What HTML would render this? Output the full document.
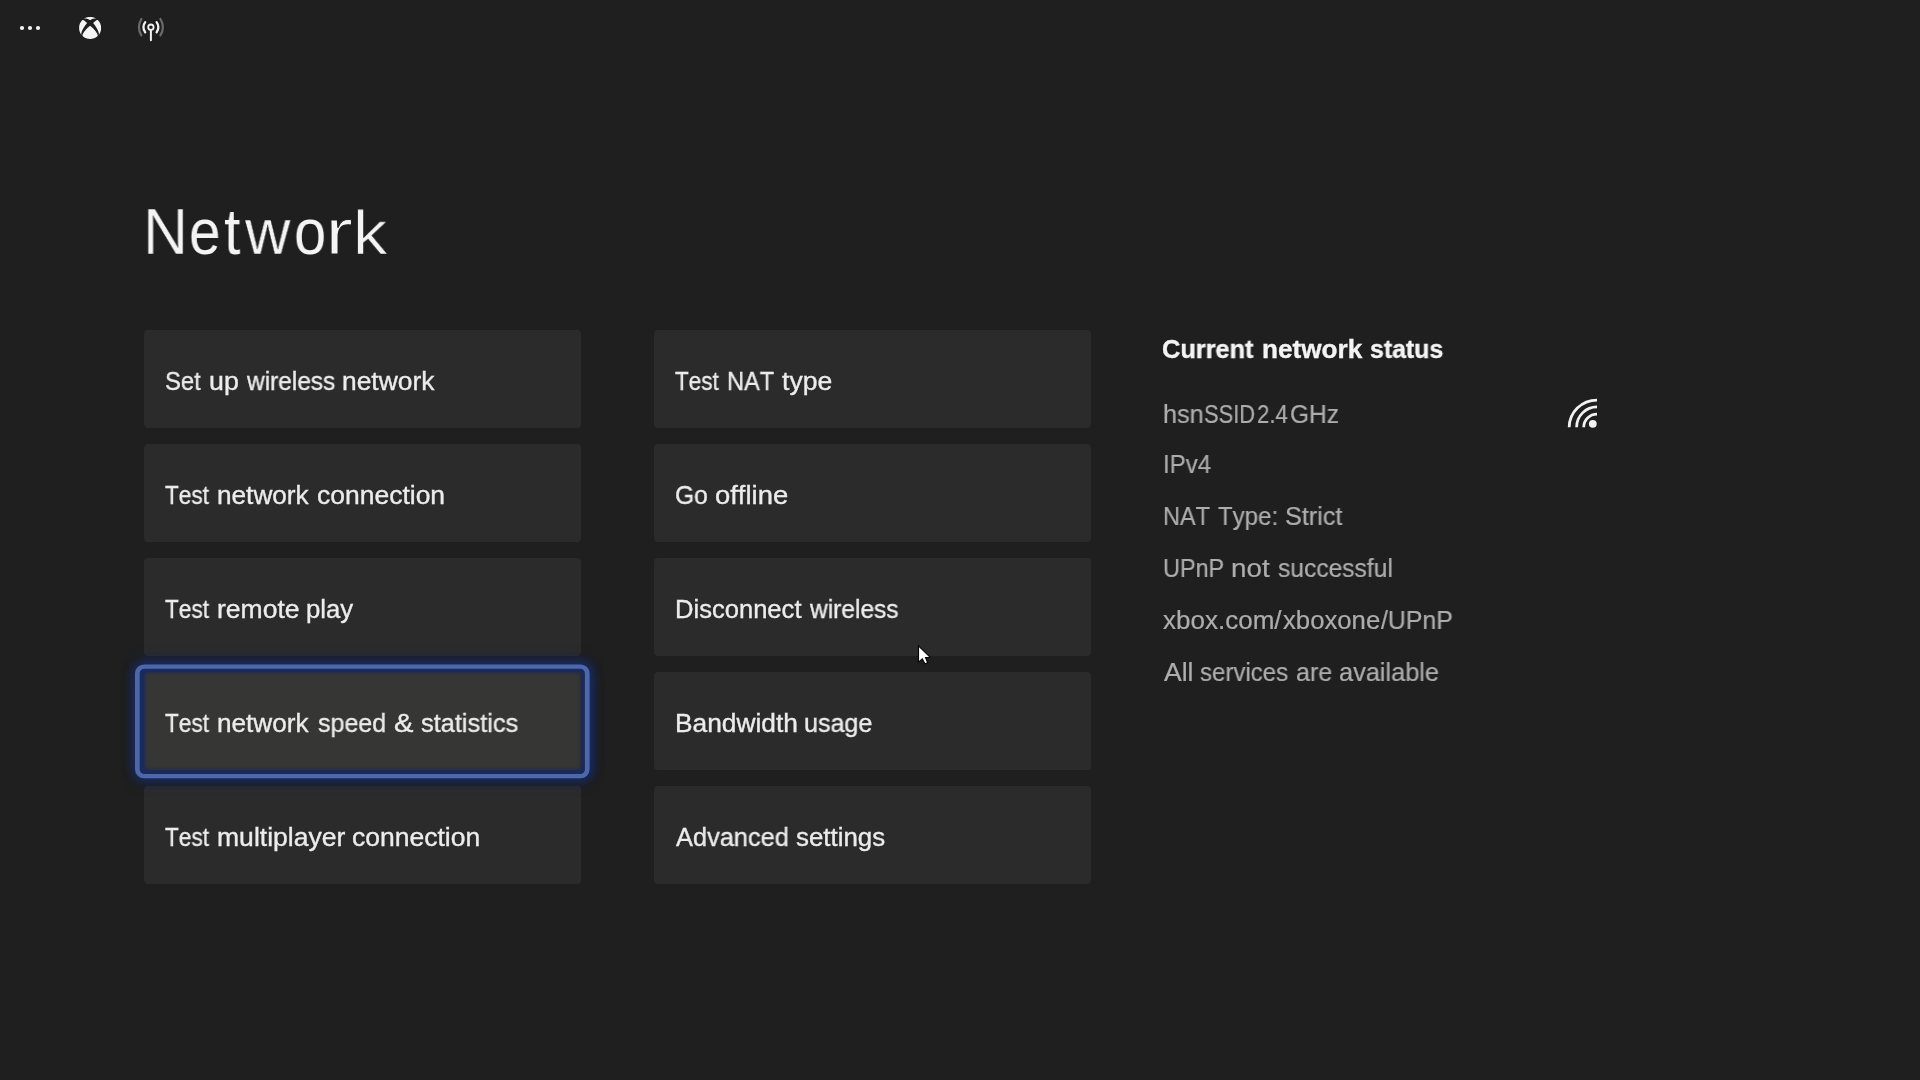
<!DOCTYPE html>
<html>
<head>
<meta charset="utf-8">
<title>Network</title>
<style>
  html, body { margin: 0; padding: 0; }
  body {
    width: 1920px; height: 1080px; overflow: hidden; position: relative;
    background: #1f1f1f;
    font-family: "Liberation Sans", sans-serif;
    color: #f4f4f4;
  }
  .abs { position: absolute; }
  .t { position: absolute; white-space: nowrap; line-height: 1; transform-origin: 0 0; will-change: transform; font-kerning: none; }
  .btn { position: absolute; width: 437.5px; height: 98.2px; background: #2b2b2b; border-radius: 4px; }
  .c1 { left: 143.8px; }
  .c2 { left: 653.8px; }
  .r1 { top: 329.5px; } .r2 { top: 443.5px; } .r3 { top: 557.5px; } .r4 { top: 671.5px; } .r5 { top: 785.5px; }
  .glow {
    position: absolute; left: 136px; top: 665px; width: 453px; height: 112px; border-radius: 9px; background: #1a2a5a;
    box-shadow: 0 0 8px 3px rgba(23,43,102,0.95), 0 -5px 12px 3px rgba(24,44,104,0.36), 0 5px 12px 3px rgba(24,44,104,0.36);
  }
  .sel { background: #363635; box-shadow: inset 0 0 3px 1px rgba(26,42,92,0.75); }
</style>
</head>
<body>

<!-- top bar icons -->
<svg class="abs" style="left:0;top:0" width="240" height="60" viewBox="0 0 240 60">
  <circle cx="22" cy="28" r="2.1" fill="#f2f2f2"/>
  <circle cx="30" cy="28" r="2.1" fill="#f2f2f2"/>
  <circle cx="38" cy="28" r="2.1" fill="#f2f2f2"/>
  <!-- xbox sphere -->
  <svg x="79.05" y="16.9" width="22.1" height="22.1" viewBox="0 0 24 24"><path fill="#f4f4f4" d="M4.102 21.033C6.211 22.881 8.977 24 12 24c3.026 0 5.789-1.119 7.902-2.967 1.877-1.912-4.316-8.709-7.902-11.417-3.582 2.708-9.779 9.505-7.898 11.417zm11.16-14.406c2.5 2.961 7.484 10.313 6.076 12.912C23.002 17.48 24 14.861 24 12.004c0-3.34-1.365-6.362-3.57-8.536 0 0-.027-.022-.082-.042-.063-.022-.152-.045-.281-.045-.592 0-1.985.434-4.805 3.246zM3.654 3.426c-.057.02-.082.041-.086.042C1.365 5.642 0 8.664 0 12.004c0 2.854.998 5.473 2.661 7.533-1.401-2.605 3.579-9.951 6.08-12.91-2.82-2.813-4.216-3.245-4.806-3.245-.131 0-.223.021-.281.046v-.002zM12 3.551S9.055 1.828 6.755 1.746c-.903-.033-1.454.295-1.521.339C7.379.646 9.659 0 11.984 0H12c2.334 0 4.605.646 6.766 2.085-.068-.046-.615-.372-1.520-.339C14.946 1.828 12 3.545 12 3.545v.006z"/></svg>
  <!-- broadcast -->
  <g fill="none" stroke-linecap="round">
    <circle cx="150.9" cy="27.2" r="2.7" stroke="#f2f2f2" stroke-width="1.8"/>
    <path d="M150.9 30.2 V40.2" stroke="#f2f2f2" stroke-width="2"/>
    <path d="M145.2 22.2 Q141.6 27.2 145.2 32.4" stroke="#f2f2f2" stroke-width="2.3"/>
    <path d="M156.6 22.2 Q160.2 27.2 156.6 32.4" stroke="#f2f2f2" stroke-width="2.3"/>
    <path d="M141.4 19 Q136.4 27.2 141.4 35.4" stroke="#6a6a6a" stroke-width="2.2"/>
    <path d="M160.4 19 Q165.4 27.2 160.4 35.4" stroke="#6a6a6a" stroke-width="2.2"/>
  </g>
</svg>

<h1 style="margin:0;font-weight:normal"><span class="t" style="left:143.13px;top:199.04px;font-size:65.4px;transform:scaleX(0.9550);-webkit-text-stroke:0.30px #1f1f1f;">N</span><span class="t" style="left:189.39px;top:199.04px;font-size:65.4px;transform:scaleX(0.8668);">e</span><span class="t" style="left:223.90px;top:199.04px;font-size:65.4px;transform:scaleX(0.9041);">t</span><span class="t" style="left:245.23px;top:199.04px;font-size:65.4px;transform:scaleX(0.9609);-webkit-text-stroke:0.34px #1f1f1f;">w</span><span class="t" style="left:293.57px;top:199.04px;font-size:65.4px;transform:scaleX(0.8841);">o</span><span class="t" style="left:325.06px;top:199.04px;font-size:65.4px;transform:scaleX(1.2933);-webkit-text-stroke:1.20px #1f1f1f;">r</span><span class="t" style="left:353.39px;top:199.04px;font-size:65.4px;transform-origin:0 55.36px;transform:scale(1.0514,0.9520);-webkit-text-stroke:0.73px #1f1f1f;">k</span></h1>

<!-- buttons -->
<div class="btn c1 r1"></div>
<div class="btn c1 r2"></div>
<div class="btn c1 r3"></div>
<div class="btn c1 r5"></div>
<div class="glow"></div>
<svg class="abs" style="left:125px;top:654px" width="475" height="135" viewBox="125 654 475 135">
  <path fill-rule="evenodd" fill="#4c68aa" d="M144 664.4 H580.6 A9 9 0 0 1 589.6 673.4 V769.3 A9 9 0 0 1 580.6 778.3 H144 A9 9 0 0 1 135 769.3 V673.4 A9 9 0 0 1 144 664.4 Z M144.29999999999998 668.7 H580.3 A4.6 4.6 0 0 1 584.9 673.3000000000001 V769.4 A4.6 4.6 0 0 1 580.3 774.0 H144.29999999999998 A4.6 4.6 0 0 1 139.7 769.4 V673.3000000000001 A4.6 4.6 0 0 1 144.29999999999998 668.7 Z"/>
</svg>
<div class="btn c1 r4 sel"></div>
<div class="btn c2 r1"></div>
<div class="btn c2 r2"></div>
<div class="btn c2 r3"></div>
<div class="btn c2 r4"></div>
<div class="btn c2 r5"></div>

<div><span class="t" style="left:165.14px;top:368.91px;font-size:25.5px;transform:scaleX(0.9328);color:#ececec;-webkit-text-stroke:0.35px #ececec;">Set</span> <span class="t" style="left:208.78px;top:368.91px;font-size:25.5px;transform:scaleX(1.0512);color:#ececec;-webkit-text-stroke:0.35px #ececec;">up</span> <span class="t" style="left:246.76px;top:368.91px;font-size:25.5px;transform:scaleX(0.9587);color:#ececec;-webkit-text-stroke:0.35px #ececec;">wireless</span> <span class="t" style="left:342.47px;top:368.91px;font-size:25.5px;transform:scaleX(1.0344);color:#ececec;-webkit-text-stroke:0.35px #ececec;">network</span></div>
<div><span class="t" style="left:165.22px;top:482.91px;font-size:25.5px;transform:scaleX(0.8857);color:#ececec;-webkit-text-stroke:0.35px #ececec;">Test</span> <span class="t" style="left:216.99px;top:482.91px;font-size:25.5px;transform:scaleX(1.0265);color:#ececec;-webkit-text-stroke:0.35px #ececec;">network</span> <span class="t" style="left:316.90px;top:482.91px;font-size:25.5px;transform:scaleX(1.0385);color:#ececec;-webkit-text-stroke:0.35px #ececec;">connection</span></div>
<div><span class="t" style="left:165.02px;top:596.91px;font-size:25.5px;transform:scaleX(0.8877);color:#ececec;-webkit-text-stroke:0.35px #ececec;">Test</span> <span class="t" style="left:216.86px;top:596.91px;font-size:25.5px;transform:scaleX(1.0400);color:#ececec;-webkit-text-stroke:0.35px #ececec;">remote</span> <span class="t" style="left:306.37px;top:596.91px;font-size:25.5px;transform:scaleX(1.0081);color:#ececec;-webkit-text-stroke:0.35px #ececec;">play</span></div>
<div><span class="t" style="left:165.22px;top:710.91px;font-size:25.5px;transform:scaleX(0.8877);color:#ececec;-webkit-text-stroke:0.35px #ececec;">Test</span> <span class="t" style="left:217.09px;top:710.91px;font-size:25.5px;transform:scaleX(1.0253);color:#ececec;-webkit-text-stroke:0.35px #ececec;">network</span> <span class="t" style="left:317.53px;top:710.91px;font-size:25.5px;transform:scaleX(0.9810);color:#ececec;-webkit-text-stroke:0.35px #ececec;">speed</span> <span class="t" style="left:393.60px;top:710.91px;font-size:25.5px;transform:scaleX(1.1423);color:#ececec;-webkit-text-stroke:0.35px #ececec;">&amp;</span> <span class="t" style="left:421.02px;top:710.91px;font-size:25.5px;transform:scaleX(0.9949);color:#ececec;-webkit-text-stroke:0.35px #ececec;">statistics</span></div>
<div><span class="t" style="left:165.12px;top:824.91px;font-size:25.5px;transform:scaleX(0.8877);color:#ececec;-webkit-text-stroke:0.35px #ececec;">Test</span> <span class="t" style="left:216.86px;top:824.91px;font-size:25.5px;transform:scaleX(1.0411);color:#ececec;-webkit-text-stroke:0.35px #ececec;">multiplayer</span> <span class="t" style="left:352.40px;top:824.91px;font-size:25.5px;transform:scaleX(1.0394);color:#ececec;-webkit-text-stroke:0.35px #ececec;">connection</span></div>
<div><span class="t" style="left:675.27px;top:368.91px;font-size:25.5px;transform:scaleX(0.8826);color:#ececec;-webkit-text-stroke:0.35px #ececec;">Test</span> <span class="t" style="left:727.34px;top:368.91px;font-size:25.5px;transform:scaleX(0.9230);color:#ececec;-webkit-text-stroke:0.35px #ececec;">NAT</span> <span class="t" style="left:782.37px;top:368.91px;font-size:25.5px;transform:scaleX(1.0411);color:#ececec;-webkit-text-stroke:0.35px #ececec;">type</span></div>
<div><span class="t" style="left:674.89px;top:482.91px;font-size:25.5px;transform:scaleX(0.9664);color:#ececec;-webkit-text-stroke:0.35px #ececec;">Go</span> <span class="t" style="left:714.97px;top:482.91px;font-size:25.5px;transform:scaleX(1.0745);color:#ececec;-webkit-text-stroke:0.35px #ececec;">offline</span></div>
<div><span class="t" style="left:674.68px;top:596.91px;font-size:25.5px;transform:scaleX(1.0027);color:#ececec;-webkit-text-stroke:0.35px #ececec;">Disconnect</span> <span class="t" style="left:809.96px;top:596.91px;font-size:25.5px;transform:scaleX(0.9620);color:#ececec;-webkit-text-stroke:0.35px #ececec;">wireless</span></div>
<div><span class="t" style="left:674.62px;top:710.91px;font-size:25.5px;transform:scaleX(1.0313);color:#ececec;-webkit-text-stroke:0.35px #ececec;">Bandwidth</span> <span class="t" style="left:804.15px;top:710.91px;font-size:25.5px;transform:scaleX(0.9837);color:#ececec;-webkit-text-stroke:0.35px #ececec;">usage</span></div>
<div><span class="t" style="left:675.73px;top:824.91px;font-size:25.5px;transform:scaleX(0.9953);color:#ececec;-webkit-text-stroke:0.35px #ececec;">Advanced</span> <span class="t" style="left:796.06px;top:824.91px;font-size:25.5px;transform:scaleX(1.0133);color:#ececec;-webkit-text-stroke:0.35px #ececec;">settings</span></div>

<div><span class="t" style="left:1161.99px;top:336.71px;font-size:25.5px;transform:scaleX(0.9941);color:#f4f4f4;font-weight:bold;-webkit-text-stroke:0.35px #f4f4f4;">Current</span> <span class="t" style="left:1261.60px;top:336.71px;font-size:25.5px;transform:scaleX(1.0264);color:#f4f4f4;font-weight:bold;-webkit-text-stroke:0.35px #f4f4f4;">network</span> <span class="t" style="left:1370.25px;top:336.71px;font-size:25.5px;transform:scaleX(0.9752);color:#f4f4f4;font-weight:bold;-webkit-text-stroke:0.35px #f4f4f4;">status</span></div>
<div><span class="t" style="left:1163.12px;top:401.51px;font-size:25.5px;transform:scaleX(0.9865);color:#adadad;-webkit-text-stroke:0.22px #adadad;">hsn</span><span class="t" style="left:1203.87px;top:401.51px;font-size:25.5px;transform:scaleX(0.8590);color:#adadad;-webkit-text-stroke:0.22px #adadad;">SSID</span><span class="t" style="left:1256.84px;top:401.51px;font-size:25.5px;transform:scaleX(0.8702);color:#adadad;-webkit-text-stroke:0.22px #adadad;">2.4</span><span class="t" style="left:1289.83px;top:401.51px;font-size:25.5px;transform:scaleX(0.9615);color:#adadad;-webkit-text-stroke:0.22px #adadad;">GHz</span></div>
<div><span class="t" style="left:1162.64px;top:451.51px;font-size:25.5px;transform:scaleX(0.9448);color:#adadad;-webkit-text-stroke:0.22px #adadad;">IPv4</span></div>
<div><span class="t" style="left:1162.94px;top:503.51px;font-size:25.5px;transform:scaleX(0.9184);color:#adadad;-webkit-text-stroke:0.22px #adadad;">NAT</span> <span class="t" style="left:1218.22px;top:503.51px;font-size:25.5px;transform:scaleX(0.9426);color:#adadad;-webkit-text-stroke:0.22px #adadad;">Type:</span> <span class="t" style="left:1284.82px;top:503.51px;font-size:25.5px;transform:scaleX(0.9884);color:#adadad;-webkit-text-stroke:0.22px #adadad;">Strict</span></div>
<div><span class="t" style="left:1163.35px;top:556.01px;font-size:25.5px;transform:scaleX(0.9183);color:#adadad;-webkit-text-stroke:0.22px #adadad;">UPnP</span> <span class="t" style="left:1231.41px;top:556.01px;font-size:25.5px;transform:scaleX(1.0897);color:#adadad;-webkit-text-stroke:0.22px #adadad;">not</span> <span class="t" style="left:1278.18px;top:556.01px;font-size:25.5px;transform:scaleX(0.9644);color:#adadad;-webkit-text-stroke:0.22px #adadad;">successful</span></div>
<div><span class="t" style="left:1163.27px;top:608.11px;font-size:25.5px;transform:scaleX(1.0204);color:#adadad;-webkit-text-stroke:0.22px #adadad;">xbox.com/</span><span class="t" style="left:1283.17px;top:608.11px;font-size:25.5px;transform:scaleX(1.0083);color:#adadad;-webkit-text-stroke:0.22px #adadad;">xboxone</span><span class="t" style="left:1381.16px;top:608.11px;font-size:25.5px;transform:scaleX(0.9741);color:#adadad;-webkit-text-stroke:0.22px #adadad;">/UPnP</span></div>
<div><span class="t" style="left:1163.51px;top:659.61px;font-size:25.5px;transform:scaleX(1.0413);color:#adadad;-webkit-text-stroke:0.22px #adadad;">All</span> <span class="t" style="left:1200.09px;top:659.61px;font-size:25.5px;transform:scaleX(0.9422);color:#adadad;-webkit-text-stroke:0.22px #adadad;">services</span> <span class="t" style="left:1295.80px;top:659.61px;font-size:25.5px;transform:scaleX(0.9795);color:#adadad;-webkit-text-stroke:0.22px #adadad;">are</span> <span class="t" style="left:1338.78px;top:659.61px;font-size:25.5px;transform:scaleX(0.9933);color:#adadad;-webkit-text-stroke:0.22px #adadad;">available</span></div>

<!-- wifi icon -->
<svg class="abs" style="left:1560px;top:392px" width="50" height="44" viewBox="1560 392 50 44">
  <g fill="none" stroke="#f2f2f2" stroke-width="2.75">
    <path d="M1569.2 427.3 A27.8 27.3 0 0 1 1597 400"/>
    <path d="M1576.6 427.3 A20.4 20.4 0 0 1 1597 406.9"/>
    <path d="M1583.7 427.3 A13.3 13.2 0 0 1 1597 414.1"/>
  </g>
  <circle cx="1592.8" cy="423.8" r="3.9" fill="#f2f2f2"/>
</svg>

<!-- cursor -->
<svg class="abs" style="left:915px;top:642px" width="20" height="26" viewBox="915 642 20 26">
  <path d="M918.5 645.8 L918.5 662.1 L922.3 658.8 L924.9 663.8 L927.7 662.7 L925.5 657.6 L930.0 657.2 Z" fill="#ffffff" stroke="#050505" stroke-width="1.15" stroke-linejoin="miter"/>
</svg>

</body>
</html>
